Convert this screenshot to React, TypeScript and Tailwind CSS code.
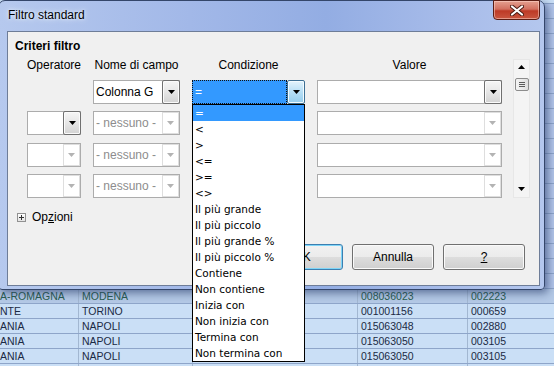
import React from 'react';

const ui = "font-['Liberation_Sans',Arial,sans-serif] text-[12px] text-black";

const sheetRows: Record<number, string[]> = {
  19: ['A-ROMAGNA', 'MODENA', '', '008036023', '002223'],
  20: ['NTE', 'TORINO', '', '001001156', '000659'],
  21: ['ANIA', 'NAPOLI', '', '015063048', '002880'],
  22: ['ANIA', 'NAPOLI', '', '015063050', '003105'],
  23: ['ANIA', 'NAPOLI', '', '015063050', '003105'],
};

const conditions = [
  '=', '<', '>', '<=', '>=', '<>',
  'Il più grande', 'Il più piccolo', 'Il più grande %', 'Il più piccolo %',
  'Contiene', 'Non contiene', 'Inizia con', 'Non inizia con', 'Termina con', 'Non termina con',
];

function Arrow({ muted, up }: { muted?: boolean; up?: boolean }) {
  return (
    <svg width="7" height="4" viewBox="0 0 7 4">
      <path d={up ? 'M0 4h7L3.5 0z' : 'M0 0h7L3.5 4z'} fill={muted ? '#b3b3b3' : '#000'} />
    </svg>
  );
}

type ComboKind = 'enabled' | 'disabled' | 'focused';

function Combo({ kind, text, muted }: { kind: ComboKind; text?: string; muted?: boolean }) {
  if (kind === 'focused') {
    return (
      <div className="flex h-[24px]">
        <div className="flex-1 border border-dotted border-[#111] bg-[#3399ff] pl-[2px] leading-[22px] text-white">
          {text}
        </div>
        <div className="flex w-[18px] items-center justify-center rounded-[2px] border border-[#3c6f94] bg-[linear-gradient(#e4f4fd,#b6def5_50%,#94cdee)] shadow-[inset_0_0_0_1px_#f2fbff]">
          <Arrow />
        </div>
      </div>
    );
  }
  return (
    <div className="flex h-[24px] border border-[#acacac] bg-white">
      <div className={`flex-1 pl-[2px] leading-[22px] ${muted ? 'text-[#8d8d8d]' : 'text-black'}`}>{text}</div>
      {kind === 'enabled' ? (
        <div className="-my-px -mr-px flex h-[24px] w-[18px] items-center justify-center rounded-[2px] border border-[#707070] bg-[linear-gradient(#f6f6f6,#e6e6e6_50%,#d3d3d3)] shadow-[inset_0_0_0_1px_#fbfbfb]">
          <Arrow />
        </div>
      ) : (
        <div className="flex w-[17px] items-center justify-center border border-[#dedede]">
          <Arrow muted />
        </div>
      )}
    </div>
  );
}

function Scrollbar() {
  return (
    <div className="ml-[11px] mt-px flex h-[139px] w-[17px] flex-col items-center border border-[#e7e7e7] bg-[#f4f4f4]">
      <div className="mt-[5px]">
        <Arrow up />
      </div>
      <div className="mt-[9px] flex h-[13px] w-[14px] flex-col items-center justify-center gap-px rounded-[2px] border border-[#8c8c8c] bg-[linear-gradient(90deg,#f4f4f4,#dedede)]">
        <div className="h-px w-[6px] bg-[#5a5a5a]" />
        <div className="h-px w-[6px] bg-[#5a5a5a]" />
        <div className="h-px w-[6px] bg-[#5a5a5a]" />
      </div>
      <div className="flex-1" />
      <div className="mb-[6px]">
        <Arrow />
      </div>
    </div>
  );
}

function PushButton({ label, isDefault, children }: { label?: string; isDefault?: boolean; children?: React.ReactNode }) {
  return (
    <div
      className={`flex h-[26px] w-[82px] items-center justify-center rounded-[3px] border bg-[linear-gradient(#f2f2f2,#ebebeb_50%,#dddddd_50%,#cfcfcf)] ${
        isDefault ? 'border-[#3c7fb1] shadow-[inset_0_0_0_1px_#7fd5f7]' : 'border-[#707070] shadow-[inset_0_0_0_1px_#fafafa]'
      }`}
    >
      {children ?? label}
    </div>
  );
}

function Sheet() {
  return (
    <div className="flex flex-col pt-[3px] font-['Liberation_Sans',Arial,sans-serif] text-[10.5px] text-[#1b2a44]">
      {Array.from({ length: 25 }, (_, i) => {
        const cells = sheetRows[i] ?? ['', '', '', '', ''];
        const tone = i === 19 ? 'bg-[#b4c9e6] text-[#2b5e50]' : i < 19 ? 'bg-[#b3c6ea]' : 'bg-[#cadff6]';
        return (
          <div key={i} className={`flex h-[15px] border-t border-[#8ea5c9] leading-[14px] ${tone}`}>
            <div className="w-[79px] shrink-0 border-r border-[#a2b7d1]">{cells[0]}</div>
            <div className="w-[114px] shrink-0 border-r border-[#a2b7d1] pl-[3px]">{cells[1]}</div>
            <div className="w-[165px] shrink-0 border-r border-[#a2b7d1] pl-[3px]">{cells[2]}</div>
            <div className="w-[110px] shrink-0 border-r border-[#a2b7d1] pl-[3px]">{cells[3]}</div>
            <div className="flex-1 pl-[3px]">{cells[4]}</div>
          </div>
        );
      })}
    </div>
  );
}

function Dialog() {
  return (
    <div className={`absolute left-[-2px] top-0 flex h-[290px] w-[547px] flex-col rounded-t-[7px] rounded-b-[4px] border border-[#34466a] bg-[linear-gradient(90deg,#b6c9ee_0%,#a2b8e8_35%,#93ade3_60%,#a9bdea_85%,#b4c7ee_100%)] shadow-[3px_3px_9px_rgba(20,40,90,0.55)] ${ui}`}>
      {/* Title bar */}
      <div className="flex h-[30px] shrink-0 items-start">
        <span className="pl-[9px] pt-[6px] leading-[16px] [text-shadow:0_0_6px_#e8f0ff,0_0_3px_#e8f0ff]">Filtro standard</span>
        <div className="-mt-px ml-auto mr-[4px] flex h-[20px] w-[47px] items-center justify-center rounded-b-[4px] border border-[#5b1d14] bg-[linear-gradient(#e5a090,#d27060_45%,#bd3a26_55%,#c95640)] shadow-[inset_0_0_0_1px_rgba(255,220,210,0.5)]">
          <svg width="14" height="11" viewBox="0 0 14 11">
            <path d="M2 1.5l10 8M12 1.5l-10 8" stroke="#4a1a12" strokeWidth="4" strokeLinecap="round" />
            <path d="M2 1.5l10 8M12 1.5l-10 8" stroke="#ffffff" strokeWidth="2.2" strokeLinecap="round" />
          </svg>
        </div>
      </div>

      {/* Client area */}
      <div className="mb-[3px] ml-[8px] mr-[4px] flex flex-1 flex-col border border-[#6e7d98] bg-[#f0f0f0] pl-[7px] pt-[6px]">
        <div className="h-[16px] font-bold leading-[16px]">Criteri filtro</div>

        <div className="mt-[4px] flex">
          <div className="ml-[12px] grid grid-cols-[54px_87px_113px_185px] gap-x-[12px] gap-y-[7px]">
            <div className="h-[15px] text-center leading-[15px]">Operatore</div>
            <div className="h-[15px] text-center leading-[15px]">Nome di campo</div>
            <div className="h-[15px] text-center leading-[15px]">Condizione</div>
            <div className="h-[15px] text-center leading-[15px]">Valore</div>

            <div />
            <Combo kind="enabled" text="Colonna G" />
            <Combo kind="focused" text="=" />
            <Combo kind="enabled" />

            <Combo kind="enabled" />
            <Combo kind="disabled" text="- nessuno -" muted />
            <Combo kind="disabled" />
            <Combo kind="disabled" />

            <Combo kind="disabled" />
            <Combo kind="disabled" text="- nessuno -" muted />
            <Combo kind="disabled" />
            <Combo kind="disabled" />

            <Combo kind="disabled" />
            <Combo kind="disabled" text="- nessuno -" muted />
            <Combo kind="disabled" />
            <Combo kind="disabled" />
          </div>
          <Scrollbar />
        </div>

        <div className="ml-[2px] mt-[11px] flex h-[16px] items-center gap-[6px]">
          <div className="flex h-[9px] w-[9px] items-center justify-center border border-[#919191] bg-[linear-gradient(#ffffff,#e4e4e4)]">
            <svg width="5" height="5" viewBox="0 0 5 5">
              <path d="M0 2.5h5M2.5 0v5" stroke="#333" strokeWidth="1" />
            </svg>
          </div>
          <span className="leading-[16px]">
            Op<span className="underline">z</span>ioni
          </span>
        </div>

        <div className="mt-[19px] flex justify-end gap-[9px] pr-[14px]">
          <PushButton label="OK" isDefault />
          <PushButton label="Annulla" />
          <PushButton>
            <span className="underline">?</span>
          </PushButton>
        </div>
      </div>
    </div>
  );
}

function ConditionList() {
  return (
    <div className="absolute left-[192px] top-[104px] w-[113px] border border-black bg-white font-['DejaVu_Sans',Verdana,sans-serif] text-[10.5px] text-black">
      {conditions.map((c, i) => (
        <div
          key={c}
          className={`h-[16px] whitespace-nowrap pl-[2px] leading-[16px] ${i === 0 ? 'bg-[#3399ff] text-white' : ''}`}
        >
          {c}
        </div>
      ))}
    </div>
  );
}

export default function App() {
  return (
    <div className="relative h-[366px] w-[554px] overflow-hidden bg-[#cadff6]">
      <Sheet />
      <Dialog />
      <ConditionList />
    </div>
  );
}
